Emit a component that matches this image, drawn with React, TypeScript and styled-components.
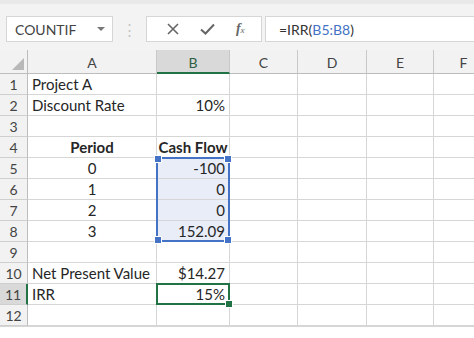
import React from "react";
import styled, { createGlobalStyle } from "styled-components";

const GRID = "#d6d6d6";
const HEAD_BG = "#f2f2f2";
const GREEN = "#217346";
const BLUE = "#4472c4";

const GlobalStyle = createGlobalStyle`
  html, body {
    margin: 0;
    padding: 0;
    background: #ffffff;
    font-family: Lato, "Liberation Sans", sans-serif;
  }
`;

const cols = ["A", "B", "C", "D", "E", "F"];

type CellData = { text?: string; align?: "left" | "right" | "center"; bold?: boolean };

const rows: CellData[][] = [
  [{ text: "Project A" }, {}],
  [{ text: "Discount Rate" }, { text: "10%", align: "right" }],
  [{}, {}],
  [{ text: "Period", align: "center", bold: true }, { text: "Cash Flow", align: "center", bold: true }],
  [{ text: "0", align: "center" }, { text: "-100", align: "right" }],
  [{ text: "1", align: "center" }, { text: "0", align: "right" }],
  [{ text: "2", align: "center" }, { text: "0", align: "right" }],
  [{ text: "3", align: "center" }, { text: "152.09", align: "right" }],
  [{}, {}],
  [{ text: "Net Present Value" }, { text: "$14.27", align: "right" }],
  [{ text: "IRR" }, { text: "15%", align: "right" }],
  [{}, {}],
];

export default function App() {
  return (
    <>
      <GlobalStyle />
      <Page>
        <Toolbar>
          <NameBox>
            <span>COUNTIF</span>
            <Caret />
          </NameBox>
          <Grip>⋮</Grip>
          <ActionBox>
            <svg width="12" height="12" viewBox="0 0 12 12">
              <path d="M1 1 L11 11 M11 1 L1 11" stroke="#666" strokeWidth="1.6" fill="none" />
            </svg>
            <svg width="15" height="12" viewBox="0 0 15 12">
              <path d="M1 6.5 L5.5 10.5 L14 1.5" stroke="#666" strokeWidth="2" fill="none" />
            </svg>
            <Fx>
              f<small>x</small>
            </Fx>
          </ActionBox>
          <FormulaBox>
            =IRR(<Ref>B5:B8</Ref>)
          </FormulaBox>
        </Toolbar>
        <Sheet>
          <Corner>
            <svg width="12" height="12" viewBox="0 0 12 12">
              <path d="M12 0 L12 12 L0 12 Z" fill="#b8b8b8" />
            </svg>
          </Corner>
          {cols.map((c, j) => (
            <ColHead key={c} $c={j + 2} $active={c === "B"}>
              {c}
            </ColHead>
          ))}
          {rows.map((r, i) => (
            <React.Fragment key={i}>
              <RowHead $r={i + 2} $active={i === 10}>
                {i + 1}
              </RowHead>
              {[...r, {}, {}, {}, {}].map((cell, j) => (
                <Cell
                  key={j}
                  $r={i + 2}
                  $c={j + 2}
                  $align={cell.align}
                  $bold={cell.bold}
                  $sel={j === 1 && i >= 4 && i <= 7}
                >
                  {cell.text}
                </Cell>
              ))}
            </React.Fragment>
          ))}
          <RangeBox>
            <Handle style={{ left: -4, top: -4 }} />
            <Handle style={{ right: -4, top: -4 }} />
            <Handle style={{ left: -4, bottom: -4 }} />
            <Handle style={{ right: -4, bottom: -4 }} />
          </RangeBox>
          <ActiveBox>
            <FillHandle />
          </ActiveBox>
        </Sheet>
      </Page>
    </>
  );
}

const Page = styled.div`
  width: 474px;
  height: 338px;
  overflow: hidden;
  background: #fff;
`;

const Toolbar = styled.div`
  height: 50px;
  box-sizing: border-box;
  background: #f3f3f3;
  border-top: 4px solid #e9e9e9;
  padding: 12px 0 0 6px;
  display: flex;
  align-items: flex-start;
`;

const NameBox = styled.div`
  width: 107px;
  height: 26px;
  box-sizing: border-box;
  background: #fff;
  border: 1px solid #d6d6d6;
  display: flex;
  align-items: center;
  justify-content: space-between;
  padding: 0 7px 0 8px;
  font-size: 14px;
  color: #444;
`;

const Caret = styled.div`
  width: 0;
  height: 0;
  border-left: 4px solid transparent;
  border-right: 4px solid transparent;
  border-top: 4px solid #777;
`;

const Grip = styled.div`
  width: 33px;
  height: 26px;
  line-height: 26px;
  text-align: center;
  color: #c4c4c4;
  font-size: 15px;
`;

const ActionBox = styled.div`
  width: 116px;
  height: 26px;
  box-sizing: border-box;
  background: #fff;
  border: 1px solid #d6d6d6;
  display: flex;
  align-items: center;
  justify-content: space-around;
  padding: 0 6px 0 10px;
`;

const Fx = styled.span`
  font-family: "Liberation Serif", serif;
  font-style: italic;
  font-weight: 700;
  font-size: 14px;
  color: #666;
  small {
    font-size: 9px;
    font-weight: 400;
  }
`;

const FormulaBox = styled.div`
  flex: 1;
  margin-left: 3px;
  height: 26px;
  box-sizing: border-box;
  background: #fff;
  border: 1px solid #d6d6d6;
  border-right: none;
  display: flex;
  align-items: center;
  padding-left: 13px;
  font-size: 14px;
  color: #333;
`;

const Ref = styled.span`
  color: ${BLUE};
`;

const Sheet = styled.div`
  display: grid;
  grid-template-columns: 28px 129px 73px 68px 69px 67px 60px;
  grid-template-rows: 24px repeat(12, 21px);
  font-size: 15px;
  color: #262626;
  border-bottom: 1px solid ${GRID};
  width: max-content;
`;

const Corner = styled.div`
  grid-row: 1;
  grid-column: 1;
  background: ${HEAD_BG};
  border-right: 1px solid #bdbdbd;
  border-bottom: 1px solid #bdbdbd;
  display: flex;
  align-items: flex-end;
  justify-content: flex-end;
  padding: 0 3px 3px 0;
`;

const ColHead = styled.div<{ $c: number; $active?: boolean }>`
  grid-row: 1;
  grid-column: ${(p) => p.$c};
  background: ${(p) => (p.$active ? "#d9d9d9" : HEAD_BG)};
  color: ${(p) => (p.$active ? "#2e5e45" : "#444")};
  border-right: 1px solid #c8c8c8;
  border-bottom: ${(p) => (p.$active ? `2px solid ${GREEN}` : "1px solid #bdbdbd")};
  display: flex;
  align-items: center;
  justify-content: center;
  font-size: 14px;
  padding-top: 2px;
`;

const RowHead = styled.div<{ $r: number; $active?: boolean }>`
  grid-row: ${(p) => p.$r};
  grid-column: 1;
  background: ${(p) => (p.$active ? "#d9d9d9" : HEAD_BG)};
  color: #444;
  border-right: ${(p) => (p.$active ? `2px solid ${GREEN}` : "1px solid #bdbdbd")};
  border-bottom: 1px solid #cfcfcf;
  display: flex;
  align-items: center;
  justify-content: center;
  font-size: 14px;
`;

const Cell = styled.div<{ $r: number; $c: number; $align?: string; $bold?: boolean; $sel?: boolean }>`
  grid-row: ${(p) => p.$r};
  grid-column: ${(p) => p.$c};
  border-right: 1px solid ${GRID};
  border-bottom: 1px solid ${GRID};
  background: ${(p) => (p.$sel ? "#e8edf8" : "#fff")};
  display: flex;
  align-items: center;
  justify-content: ${(p) =>
    p.$align === "right" ? "flex-end" : p.$align === "center" ? "center" : "flex-start"};
  padding: 0 4px;
  font-weight: ${(p) => (p.$bold ? 700 : 400)};
  white-space: nowrap;
  overflow: visible;
`;

const RangeBox = styled.div`
  grid-column: 3;
  grid-row: 6 / 10;
  position: relative;
  border: 2px solid ${BLUE};
  margin: -1px 0 0 -1px;
  pointer-events: none;
`;

const Handle = styled.div`
  position: absolute;
  width: 6px;
  height: 6px;
  background: ${BLUE};
  border: 1px solid #fff;
`;

const ActiveBox = styled.div`
  grid-column: 3;
  grid-row: 12;
  position: relative;
  border: 2px solid ${GREEN};
  margin: -1px 0 0 -1px;
  pointer-events: none;
`;

const FillHandle = styled.div`
  position: absolute;
  right: -5px;
  bottom: -5px;
  width: 6px;
  height: 6px;
  background: ${GREEN};
  border: 1px solid #fff;
`;
